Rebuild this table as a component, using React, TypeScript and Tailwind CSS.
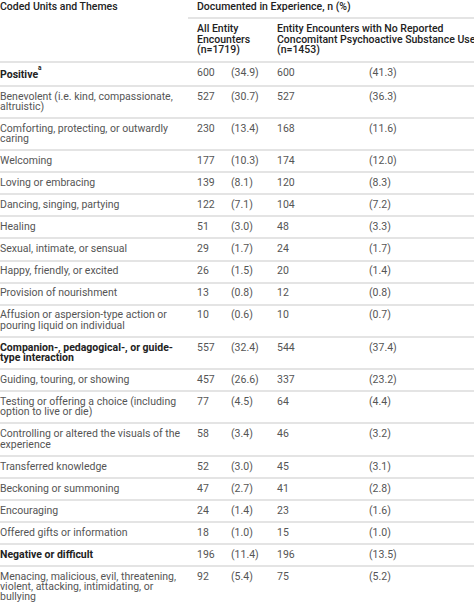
import React from "react";

type Row = { label: React.ReactNode; n1: string; p1: string; n2: string; p2: string; bold?: boolean };

const rows: Row[] = [
  { label: <>Positive<sup className="text-[6.5px] align-super leading-none">a</sup></>, n1: "600", p1: "(34.9)", n2: "600", p2: "(41.3)", bold: true },
  { label: "Benevolent (i.e. kind, compassionate, altruistic)", n1: "527", p1: "(30.7)", n2: "527", p2: "(36.3)" },
  { label: "Comforting, protecting, or outwardly caring", n1: "230", p1: "(13.4)", n2: "168", p2: "(11.6)" },
  { label: "Welcoming", n1: "177", p1: "(10.3)", n2: "174", p2: "(12.0)" },
  { label: "Loving or embracing", n1: "139", p1: "(8.1)", n2: "120", p2: "(8.3)" },
  { label: "Dancing, singing, partying", n1: "122", p1: "(7.1)", n2: "104", p2: "(7.2)" },
  { label: "Healing", n1: "51", p1: "(3.0)", n2: "48", p2: "(3.3)" },
  { label: "Sexual, intimate, or sensual", n1: "29", p1: "(1.7)", n2: "24", p2: "(1.7)" },
  { label: "Happy, friendly, or excited", n1: "26", p1: "(1.5)", n2: "20", p2: "(1.4)" },
  { label: "Provision of nourishment", n1: "13", p1: "(0.8)", n2: "12", p2: "(0.8)" },
  { label: "Affusion or aspersion-type action or pouring liquid on individual", n1: "10", p1: "(0.6)", n2: "10", p2: "(0.7)" },
  { label: "Companion-, pedagogical-, or guide-type interaction", n1: "557", p1: "(32.4)", n2: "544", p2: "(37.4)", bold: true },
  { label: "Guiding, touring, or showing", n1: "457", p1: "(26.6)", n2: "337", p2: "(23.2)" },
  { label: "Testing or offering a choice (including option to live or die)", n1: "77", p1: "(4.5)", n2: "64", p2: "(4.4)" },
  { label: "Controlling or altered the visuals of the experience", n1: "58", p1: "(3.4)", n2: "46", p2: "(3.2)" },
  { label: "Transferred knowledge", n1: "52", p1: "(3.0)", n2: "45", p2: "(3.1)" },
  { label: "Beckoning or summoning", n1: "47", p1: "(2.7)", n2: "41", p2: "(2.8)" },
  { label: "Encouraging", n1: "24", p1: "(1.4)", n2: "23", p2: "(1.6)" },
  { label: "Offered gifts or information", n1: "18", p1: "(1.0)", n2: "15", p2: "(1.0)" },
  { label: "Negative or difficult", n1: "196", p1: "(11.4)", n2: "196", p2: "(13.5)", bold: true },
  { label: "Menacing, malicious, evil, threatening, violent, attacking, intimidating, or bullying", n1: "92", p1: "(5.4)", n2: "75", p2: "(5.2)" },
];

const cell = "align-top py-[4.9px] pl-[9px] pr-0 text-left";

export default function App() {
  return (
    <div className="w-[474px] h-[602px] overflow-hidden bg-white" style={{ fontFamily: "Roboto, 'Liberation Sans', sans-serif" }}>
      <table className="w-[520px] border-collapse text-[10.5px] leading-[10.25px] text-[#555] table-fixed">
        <colgroup>
          <col className="w-[188px]" />
          <col className="w-[34px]" />
          <col className="w-[46px]" />
          <col className="w-[92px]" />
          <col className="w-[160px]" />
        </colgroup>
        <thead className="text-[#222] font-medium">
          <tr>
            <th rowSpan={2} className="align-top text-left font-medium pt-[1.5px] pr-2 border-b-2 border-[#e4e4e4]">Coded Units and Themes</th>
            <th colSpan={4} className="align-top text-left font-medium pl-[9px] pt-[1.5px] pb-[5px] border-b-2 border-[#e4e4e4]">Documented in Experience, n (%)</th>
          </tr>
          <tr>
            <th colSpan={2} className="align-top text-left font-medium pl-[9px] pt-[5.5px] pb-[5.5px] leading-[10.5px] border-b-2 border-[#e4e4e4]">All Entity<br />Encounters<br />(n=1719)</th>
            <th colSpan={2} className="align-top text-left font-medium pl-[9px] pt-[5.5px] pb-[5.5px] leading-[10.5px] border-b-2 border-[#e4e4e4] whitespace-nowrap">Entity Encounters with No Reported<br />Concomitant Psychoactive Substance Use<br />(n=1453)</th>
          </tr>
        </thead>
        <tbody>
          {rows.map((r, i) => (
            <tr key={i} className="border-b-2 border-[#e4e4e4]">
              <td className={"align-top py-[4.9px] pr-2 " + (r.bold ? "font-bold text-[#222]" : "")}>{r.label}</td>
              <td className={cell}>{r.n1}</td>
              <td className={cell}>{r.p1}</td>
              <td className={cell}>{r.n2}</td>
              <td className={cell}>{r.p2}</td>
            </tr>
          ))}
        </tbody>
      </table>
    </div>
  );
}
